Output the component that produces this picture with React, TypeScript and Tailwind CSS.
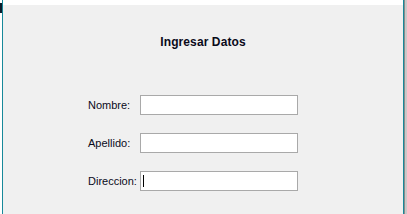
const fields = ['Nombre:', 'Apellido:', 'Direccion:'];

function Field({ label, focused }: { label: string; focused?: boolean }) {
  return (
    <div className="flex items-center h-[20px]">
      <span className="w-[52px] text-[11px] leading-[20px] text-[#0a0a1a]">{label}</span>
      <div className="w-[158px] h-[20px] bg-white border border-[#a9a9a9] flex items-center pl-[2px]">
        {focused && <span className="w-[1px] h-[12px] bg-black" />}
      </div>
    </div>
  );
}

export default function App() {
  return (
    <div className="flex w-[407px] h-[214px] bg-white overflow-hidden" style={{ fontFamily: '"Liberation Sans", Arial, sans-serif' }}>
      <div className="w-[2px] flex flex-col">
        <div className="h-[3px]" />
        <div className="h-[10px] bg-[#0b1b2b]" />
      </div>
      <div className="w-[1px] bg-[#17899a]" />
      <div className="flex-1 flex flex-col">
        <div className="h-[5px] bg-white" />
        <div className="flex-1 bg-[#f0f0f0] flex flex-col">
          <div className="mt-[30px] h-[14px] text-center text-[12px] leading-[14px] font-bold tracking-[0.1px] text-[#0a0a1a]">
            Ingresar Datos
          </div>
          <div className="mt-[46px] pl-[85px] flex flex-col gap-[18px]">
            {fields.map((f, i) => (
              <Field key={f} label={f} focused={i === 2} />
            ))}
          </div>
        </div>
      </div>
      <div className="w-[1px] bg-[#17899a]" />
      <div className="w-[1px] bg-[#8a8a8a]" />
      <div className="w-[2px] bg-[#c9c9c9]" />
    </div>
  );
}
